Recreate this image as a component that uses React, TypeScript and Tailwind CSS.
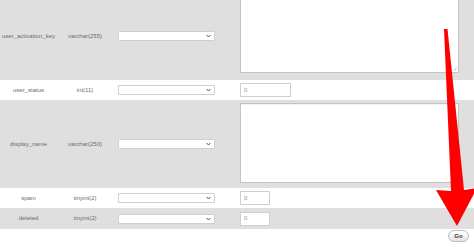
import React from 'react';

const FONT = { fontFamily: '"Liberation Sans", Arial, sans-serif' };

function FakeSelect() {
    return (
        <div className="ml-[5px] flex h-[10px] w-[97px] items-center justify-end rounded-[1px] border border-[#cfcfcf] bg-white pr-[3px]">
            <svg width="5" height="4" viewBox="0 0 5 4">
                <path d="M0.6 1 L2.5 3 L4.4 1" fill="none" stroke="#555" strokeWidth="1" />
            </svg>
        </div>
    );
}

function NumInput({ w }: { w: string }) {
    return (
        <div className={`flex h-[14px] items-center border border-[#cfcfcf] bg-white pl-[3px] text-[6px] text-[#999] ${w}`}>
            0
        </div>
    );
}

function TextBox({ h }: { h: string }) {
    return (
        <div className={`relative mt-[3px] w-[219px] border border-[#c4c4c4] bg-white shadow-[inset_0_1px_1px_rgba(0,0,0,0.06)] ${h}`}>
            <svg className="absolute bottom-[1px] right-[1px]" width="4" height="4" viewBox="0 0 4 4">
                <path d="M0.5 3.5 L3.5 0.5 M2 3.5 L3.5 2" stroke="#aaa" strokeWidth="0.6" />
            </svg>
        </div>
    );
}

type Row = { name: string; type: string; bg: string; h: string; field: React.ReactNode; tall?: boolean };

const rows: Row[] = [
    { name: 'user_activation_key', type: 'varchar(255)', bg: 'bg-[#dfdfdf]', h: 'h-[88px]', field: <TextBox h="h-[78px]" />, tall: true },
    { name: 'user_status', type: 'int(11)', bg: 'bg-white', h: 'h-[20px]', field: <NumInput w="w-[51px]" /> },
    { name: 'display_name', type: 'varchar(250)', bg: 'bg-[#dfdfdf]', h: 'h-[88px]', field: <TextBox h="h-[80px]" />, tall: true },
    { name: 'spam', type: 'tinyint(2)', bg: 'bg-white', h: 'h-[20px]', field: <NumInput w="w-[30px]" /> },
    { name: 'deleted', type: 'tinyint(2)', bg: 'bg-[#dfdfdf]', h: 'h-[21px]', field: <NumInput w="w-[30px]" /> },
];

export default function App() {
    return (
        <div className="relative h-[247px] w-[474px] overflow-hidden bg-white text-[6px] text-[#6b6b6b]" style={FONT}>
            <div className="-mt-[8px]">
                {rows.map((r) => (
                    <div key={r.name} className={`grid grid-cols-[57px_56px_127px_1fr] items-center ${r.bg} ${r.h}`}>
                        <div className="text-center">{r.name}</div>
                        <div className="text-center">{r.type}</div>
                        <div><FakeSelect /></div>
                        <div className={`flex ${r.tall ? 'self-start' : ''}`}>{r.field}</div>
                    </div>
                ))}
            </div>

            <div className="flex justify-end pr-[5px] pt-[1px]">
                <button className="flex h-[12px] w-[21px] items-center justify-center rounded-full border border-[#bdbdbd] bg-gradient-to-b from-white to-[#e4e4e4] text-[6px] font-bold text-[#333]">
                    Go
                </button>
            </div>

            {/* red arrow pointing at Go */}
            <svg className="pointer-events-none absolute left-0 top-0" width="474" height="247" viewBox="0 0 474 247">
                <polygon points="444,29 447.5,29 464,190 477,188 457,226 436,190 451,191" fill="#ff0000" />
            </svg>
        </div>
    );
}
